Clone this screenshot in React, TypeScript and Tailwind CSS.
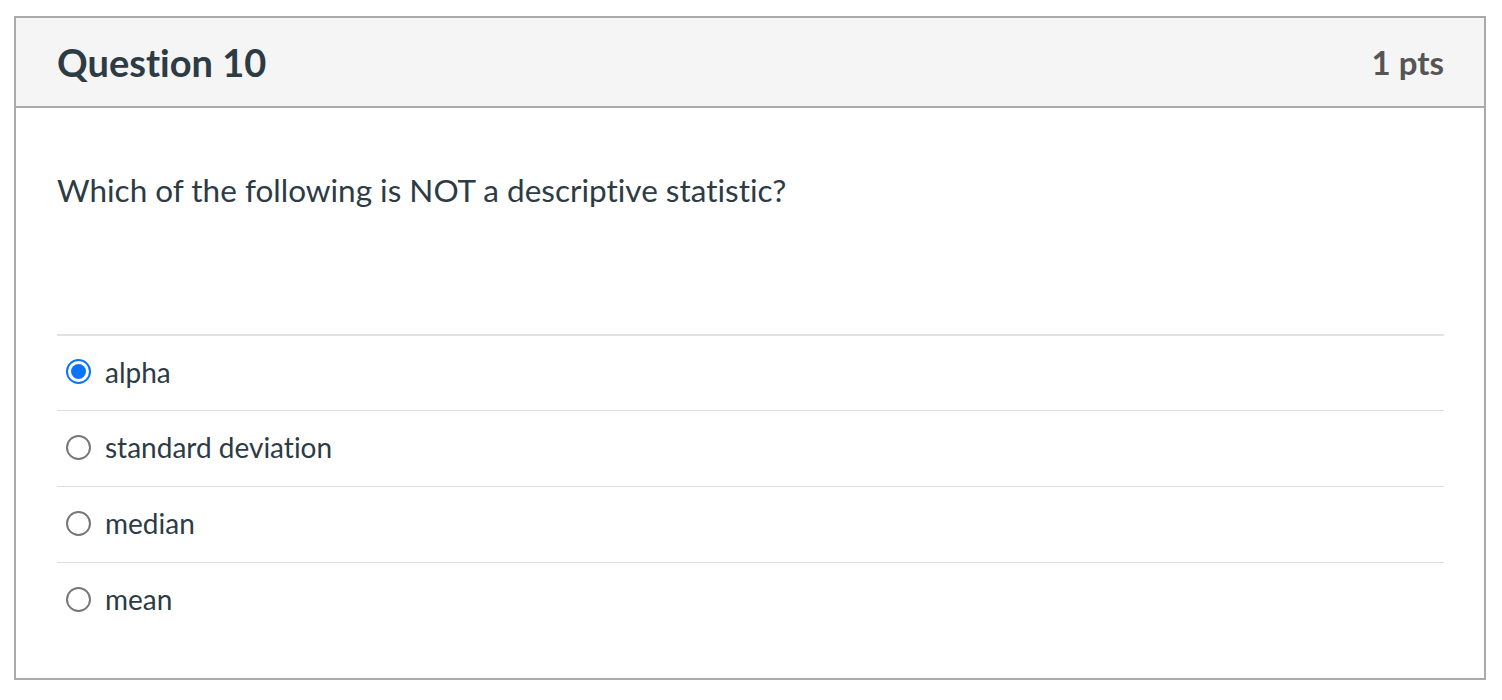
const options = [
  { label: "alpha", checked: true },
  { label: "standard deviation", checked: false },
  { label: "median", checked: false },
  { label: "mean", checked: false },
];

function Radio({ checked }: { checked: boolean }) {
  if (checked) {
    return (
      <span className="flex h-[25px] w-[25px] shrink-0 items-center justify-center rounded-full border-2 border-[#0b74fb] bg-white">
        <span className="h-[15px] w-[15px] rounded-full bg-[#0b74fb]" />
      </span>
    );
  }
  return <span className="h-[25px] w-[25px] shrink-0 rounded-full border-2 border-[#777777] bg-white" />;
}

export default function App() {
  return (
    <div className="min-h-screen bg-white pt-[16px] pl-[14px] pr-[16px] font-['Lato','Noto_Sans',sans-serif] text-[#2d3b45] [font-variant-ligatures:none] [font-feature-settings:'liga'_0,'clig'_0]">
      <div className="border-2 border-[#aaaaaa]">
        <div className="flex h-[90px] items-center justify-between border-b-2 border-[#aaaaaa] bg-[#f5f5f5] pl-[41px] pr-[40px]">
          <h2 className="text-[38px] font-bold leading-none">Question 10</h2>
          <span className="text-[33px] font-bold leading-none text-[#555555]">1 pts</span>
        </div>
        <div className="pl-[41px] pr-[40px] pb-[40px]">
          <p className="pt-[64px] pb-[126px] text-[31.5px] leading-[36px]">
            Which of the following is NOT a descriptive statistic?
          </p>
          <div>
            {options.map((o) => (
              <label
                key={o.label}
                className="flex h-[76px] items-center gap-[14px] border-t border-[#dddddd] pb-[3px] pl-[9px] first:border-t-2 first:border-[#e2e2e2]"
              >
                <Radio checked={o.checked} />
                <span className="text-[28px] leading-none">{o.label}</span>
              </label>
            ))}
          </div>
        </div>
      </div>
    </div>
  );
}
